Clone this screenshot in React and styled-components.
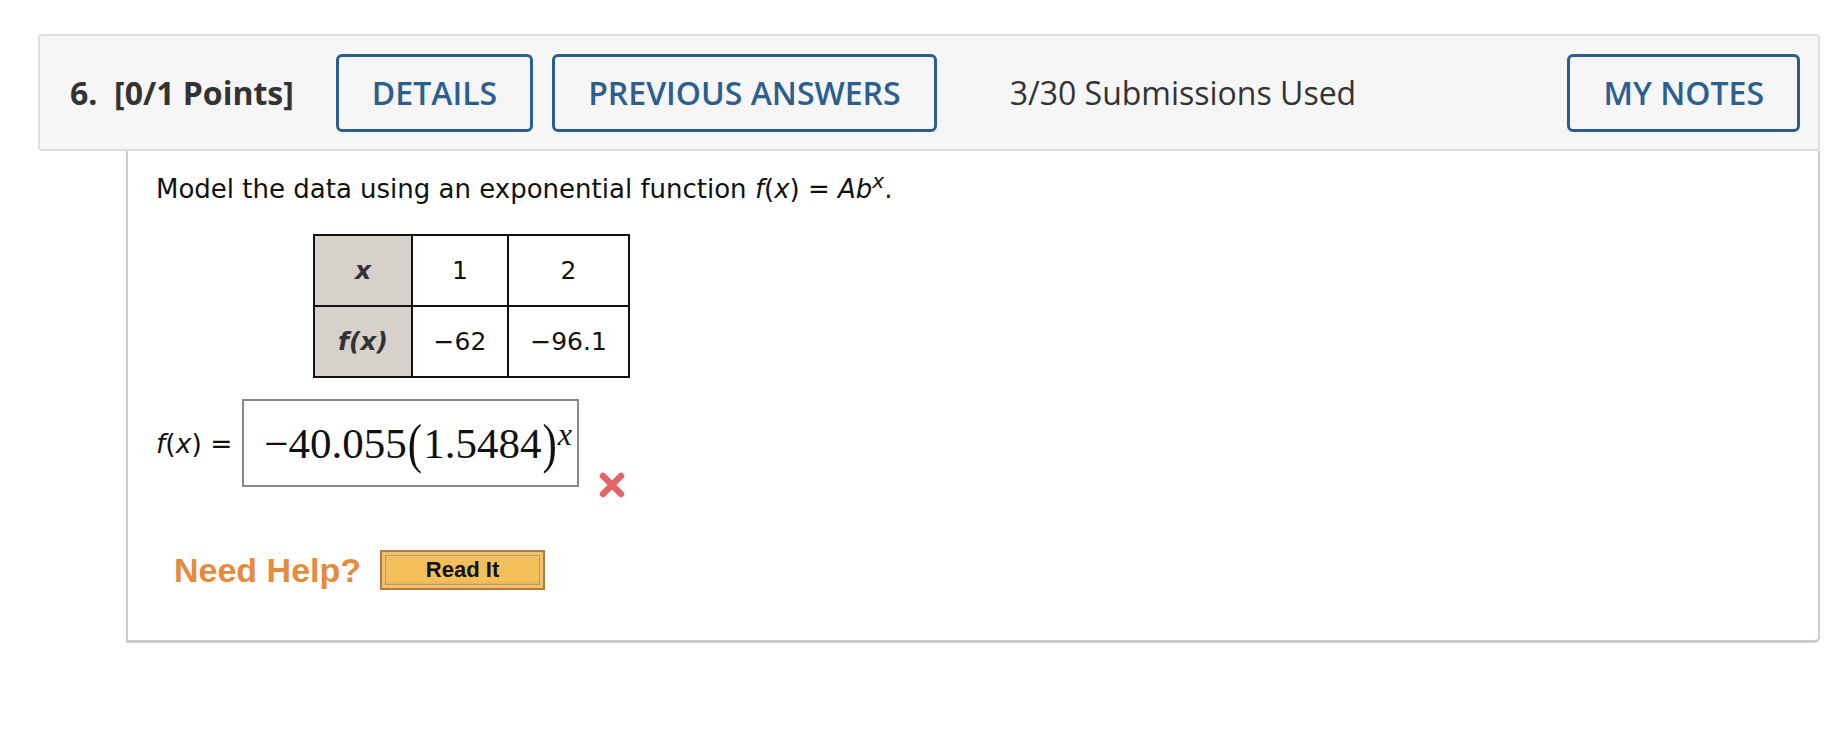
import styled, { createGlobalStyle } from 'styled-components';

const GlobalStyle = createGlobalStyle`
  body {
    margin: 0;
    background: #fff;
    font-family: "Open Sans", "DejaVu Sans", sans-serif;
  }
`

const Page = styled.div`
  padding: 34px 12px 0 38px;
`

const Header = styled.div`
  display: flex;
  align-items: center;
  height: 117px;
  box-sizing: border-box;
  padding: 0 18px 0 30px;
  background: #f6f6f6;
  border: 2px solid #dedede;
  border-radius: 4px;
`

const Title = styled.div`
  font-size: 32px;
  font-weight: 700;
  color: #333;
  margin-right: 42px;
  white-space: pre;
`

const OutlineButton = styled.button`
  height: 78px;
  box-sizing: border-box;
  padding: 0 33px;
  margin-right: ${p => p.$gap || 0}px;
  margin-left: ${p => (p.$right ? 'auto' : '0')};
  background: #fff0;
  border: 3px solid #2b5f91;
  border-radius: 6px;
  color: #2b5f91;
  font-family: "Open Sans", sans-serif;
  font-size: 32px;
  font-weight: 600;
`

const Submissions = styled.div`
  font-size: 32px;
  color: #333;
`

const Body = styled.div`
  margin-left: 88px;
  height: 492px;
  box-sizing: border-box;
  border: 2px solid #cccccc;
  border-top: none;
  border-bottom-width: 3px;
  border-bottom-right-radius: 6px;
  padding: 20px 28px 0;
  font-family: "DejaVu Sans", Verdana, sans-serif;
  color: #111;
`

const Prompt = styled.p`
  margin: 0;
  font-size: 26px;
  line-height: 36px;
  sup {
    font-size: 20px;
    line-height: 0;
  }
`

const DataTable = styled.table`
  margin: 27px 0 0 157px;
  border-collapse: collapse;
  font-size: 25px;
  td {
    border: 2px solid #111;
    height: 69px;
    text-align: center;
    padding: 0;
  }
`

const HeadCell = styled.td`
  width: 96px;
  background: #d6d2cb;
  color: #333;
  font-weight: 700;
  font-style: italic;
`

const ValueCell = styled.td`
  width: ${p => p.$w}px;
`

const AnswerRow = styled.div`
  display: flex;
  align-items: center;
  margin-top: 21px;
`

const Label = styled.span`
  font-size: 26.5px;
  margin-right: 10px;
  white-space: pre;
`

const AnswerBox = styled.div`
  width: 337px;
  height: 88px;
  box-sizing: border-box;
  border: 2px solid #888;
  padding: 0 0 0 20px;
  display: flex;
  align-items: center;
  font-family: "Liberation Serif", "Times New Roman", serif;
  font-size: 43px;
  color: #111;
  white-space: pre;
  .paren {
    display: inline-block;
    transform: scaleY(1.3);
    margin: 0 1px;
  }
  sup {
    font-style: italic;
    font-size: 32px;
    line-height: 0;
    position: relative;
    top: -9px;
  }
`

const WrongMark = styled.svg`
  width: 28px;
  height: 28px;
  margin: 0 0 -12px 19px;
  align-self: flex-end;
`

const HelpRow = styled.div`
  display: flex;
  align-items: center;
  margin: 63px 0 0 18px;
`

const NeedHelp = styled.span`
  font-family: "Liberation Sans", Arial, sans-serif;
  font-weight: 700;
  font-size: 34px;
  color: #e58c3c;
  margin-right: 19px;
`

const ReadIt = styled.button`
  width: 165px;
  height: 40px;
  box-sizing: border-box;
  border: 2px solid #b57b3c;
  background: linear-gradient(#f4d9a4 0, #f4d9a4 3px, #f2bf5a 5px, #f2bf5a 80%, #eaa04a 100%);
  box-shadow: inset 0 0 0 3px #f0c270, inset 0 0 0 4px #b59a6a;
  font-family: "Liberation Sans", Arial, sans-serif;
  font-weight: 700;
  font-size: 22px;
  color: #111;
  padding: 0;
`

function App() {
  return (
    <>
      <GlobalStyle />
      <Page>
        <Header>
          <Title>6.  [0/1 Points]</Title>
          <OutlineButton $gap={19}>DETAILS</OutlineButton>
          <OutlineButton $gap={73}>PREVIOUS ANSWERS</OutlineButton>
          <Submissions>3/30 Submissions Used</Submissions>
          <OutlineButton $right>MY NOTES</OutlineButton>
        </Header>
        <Body>
          <Prompt>
            Model the data using an exponential function <i>f</i>(<i>x</i>) = <i>Ab</i><sup><i>x</i></sup>.
          </Prompt>
          <DataTable>
            <tbody>
              <tr>
                <HeadCell>x</HeadCell>
                <ValueCell $w={94}>1</ValueCell>
                <ValueCell $w={119}>2</ValueCell>
              </tr>
              <tr>
                <HeadCell>f(x)</HeadCell>
                <ValueCell $w={94}>−62</ValueCell>
                <ValueCell $w={119}>−96.1</ValueCell>
              </tr>
            </tbody>
          </DataTable>
          <AnswerRow>
            <Label><i>f</i>(<i>x</i>) =</Label>
            <AnswerBox>
              −40.055<span className="paren">(</span>1.5484<span className="paren">)</span><sup>x</sup>
            </AnswerBox>
            <WrongMark viewBox="0 0 28 28">
              <path d="M5 5 L23 23 M23 5 L5 23" stroke="#e5646a" strokeWidth="6.5" strokeLinecap="round" />
            </WrongMark>
          </AnswerRow>
          <HelpRow>
            <NeedHelp>Need Help?</NeedHelp>
            <ReadIt>Read It</ReadIt>
          </HelpRow>
        </Body>
      </Page>
    </>
  )
}

export default App
